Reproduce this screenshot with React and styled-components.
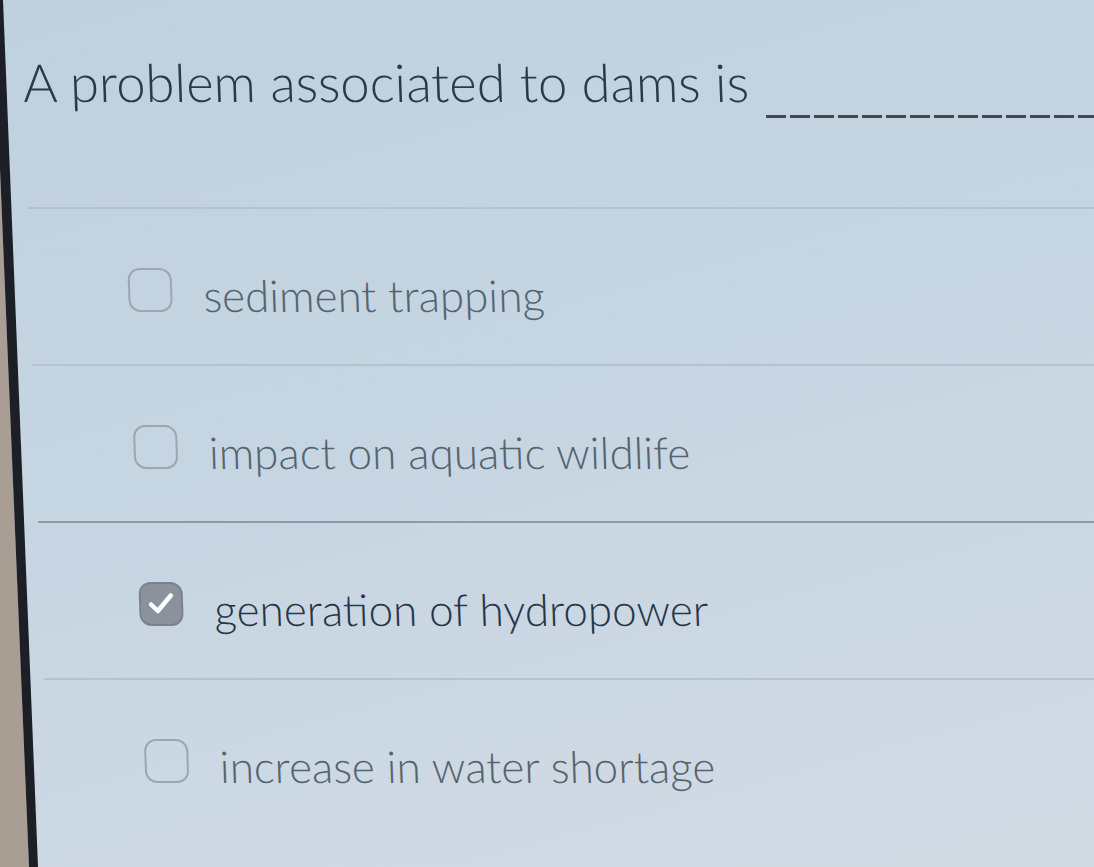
import React from 'react';
import styled, { createGlobalStyle } from 'styled-components';

const GlobalStyle = createGlobalStyle`
  html, body { margin: 0; padding: 0; height: 100%; }
  body { font-family: Lato, "Noto Sans", sans-serif; overflow: hidden; }
  #root { height: 100%; }
`;

const Page = styled.div`
  position: relative;
  width: 100%;
  height: 100vh;
  overflow: hidden;
  background: linear-gradient(165deg, #bfd0de 0%, #c6d5e2 45%, #d2dbe4 100%);
`;

/* The monitor frame seen along the left side */
const Bezel = styled.svg`
  position: absolute;
  left: 0;
  top: 0;
  pointer-events: none;
`;

const Screen = styled.main`
  display: flex;
  flex-direction: column;
  padding: 0 0 0 20px;
  transform: skewX(2deg);
  transform-origin: top left;
`;

const Question = styled.h1`
  display: flex;
  align-items: flex-start;
  margin: 0;
  height: 207px;
  padding-top: 52px;
  box-sizing: border-box;
  font-size: 52.6px;
  line-height: 60px;
  font-weight: 300;
  color: #2a3a48;
  white-space: nowrap;
`;

/* Fill-in-the-blank line drawn as dashes */
const Blank = styled.span`
  flex: 1;
  height: 3px;
  margin: 63px 0 0 16px;
  background: repeating-linear-gradient(to right, #3c4a56 0 20px, transparent 20px 24px);
`;

const OptionList = styled.ul`
  list-style: none;
  margin: 0;
  padding: 0;
`;

const OptionRow = styled.li`
  box-sizing: border-box;
  display: flex;
  align-items: center;
  gap: 31px;
  height: 157px;
  padding: 6px 0 0 98px;
  border-top: 2px solid ${(p) => (p.$strong ? '#8e9aa5' : '#b5c3cf')};
`;

const Box = styled.span`
  flex: none;
  display: grid;
  place-items: center;
  width: 40px;
  height: 40px;
  border-radius: 12px;
  border: 2px solid ${(p) => (p.$checked ? '#7a838c' : '#9ba7b2')};
  background: ${(p) => (p.$checked ? '#8a939b' : 'transparent')};
`;

const Label = styled.span`
  margin-top: 10px;
  font-size: 44px;
  line-height: 50px;
  font-weight: 300;
  color: ${(p) => (p.$checked ? '#26364a' : '#55646f')};
  white-space: nowrap;
`;

const options = [
  { text: 'sediment trapping' },
  { text: 'impact on aquatic wildlife' },
  { text: 'generation of hydropower', checked: true },
  { text: 'increase in water shortage' },
];

function Check() {
  return (
    <svg width="32" height="32" viewBox="0 0 32 32" fill="none">
      <path d="M6 16.5 L12.5 23 L26 7.5" stroke="#fff" strokeWidth="4.5" strokeLinecap="round" strokeLinejoin="round" />
    </svg>
  );
}

export default function App() {
  return (
    <Page>
      <GlobalStyle />
      <Screen>
        <Question>
          <span>A problem associated to dams is</span>
          <Blank />
        </Question>
        <OptionList>
          {options.map((o, i) => (
            <OptionRow key={i} $strong={i === 2}>
              <Box $checked={o.checked}>{o.checked && <Check />}</Box>
              <Label $checked={o.checked}>{o.text}</Label>
            </OptionRow>
          ))}
        </OptionList>
      </Screen>
      <Bezel width="60" height="867" viewBox="0 0 60 867">
        <polygon points="0,0 0,867 29,867 -7,0" fill="#a89e94" />
        <polygon points="-7,0 29,867 38,867 3,0" fill="#1c1f26" />
      </Bezel>
    </Page>
  );
}
